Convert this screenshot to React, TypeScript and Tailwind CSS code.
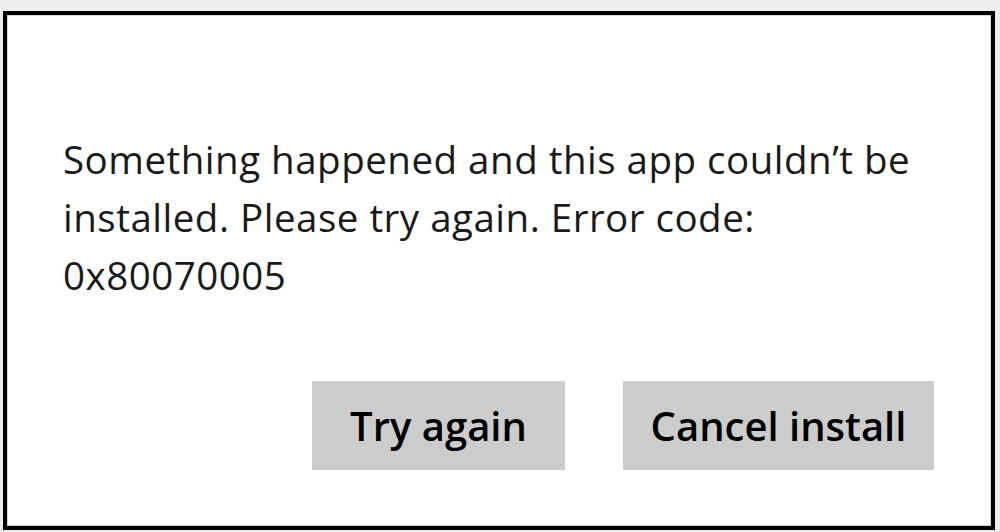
export default function App() {
  return (
    <div className="w-[1000px] h-[532px] bg-[#ededed] pt-[11px] pl-[3px] overflow-hidden" style={{ fontFamily: '"Open Sans", "Noto Sans", sans-serif' }}>
      <div className="w-[992px] h-[519px] border-4 border-black bg-white flex flex-col">
        <div className="flex-1 border border-[#d6d6d6] flex flex-col">
          <p className="mt-[114px] ml-[55px] text-[38.5px] leading-[58px] tracking-[0.5px] text-[#1a1a1a] w-[900px]">
            Something happened and this app couldn’t be installed. Please try again. Error code: 0x80070005
          </p>
          <div className="mt-auto mb-[55px] mr-[56px] flex justify-end gap-[58px]">
            <button className="w-[253px] h-[89px] bg-[#cccccc] text-[40px] font-semibold text-black">Try again</button>
            <button className="w-[311px] h-[89px] bg-[#cccccc] text-[40px] font-semibold text-black">Cancel install</button>
          </div>
        </div>
      </div>
    </div>
  )
}
